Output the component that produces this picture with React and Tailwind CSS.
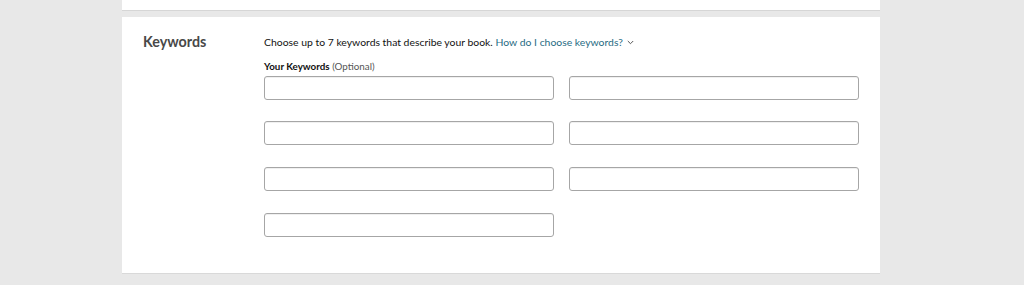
export default function App() {
  const font = { fontFamily: 'Lato, "Noto Sans", Arial, sans-serif' };
  const Input = () => (
    <input className="h-[24px] w-[290px] border border-[#a6a6a6] rounded-[3px] bg-white shadow-[inset_0_1px_0_rgba(0,0,0,0.06)] outline-none" />
  );
  return (
    <div className="w-[1024px] h-[285px] bg-[#e8e8e8] overflow-hidden" style={font}>
      <div className="ml-[122px] w-[758px]">
        <div className="h-[11px] bg-white border-b border-[#d6d6d6]" />
        <div className="mt-[6px] bg-white border-b border-[#d9d9d9] flex pt-[17px] pb-[36px]">
          <div className="w-[142px] pl-[21px]">
            <h2 className="text-[14.3px] leading-[18px] mt-[-1px] font-bold text-[#484848]">Keywords</h2>
          </div>
          <div className="flex-1">
            <p className="text-[10.4px] leading-[16px] text-[#111]">
              Choose up to 7 keywords that describe your book.{' '}
              <span className="text-[#1f6b83]">
                How do I choose keywords?
                <svg className="inline-block ml-[4px] mb-[1px]" width="7" height="5" viewBox="0 0 7 5">
                  <path d="M0.8 1 L3.5 3.7 L6.2 1" fill="none" stroke="#555" strokeWidth="1" />
                </svg>
              </span>
            </p>
            <div className="mt-[8px] text-[9.8px] leading-[16px] text-[#111]">
              <span className="font-bold">Your Keywords</span>{' '}
              <span className="text-[#555]">(Optional)</span>
            </div>
            <div className="mt-[2px] flex flex-col">
              <div className="flex gap-x-[15px]"><Input /><Input /></div>
              <div className="flex gap-x-[15px] mt-[21px]"><Input /><Input /></div>
              <div className="flex gap-x-[15px] mt-[22px]"><Input /><Input /></div>
              <div className="flex gap-x-[15px] mt-[22px]"><Input /></div>
            </div>
          </div>
        </div>
      </div>
    </div>
  );
}
